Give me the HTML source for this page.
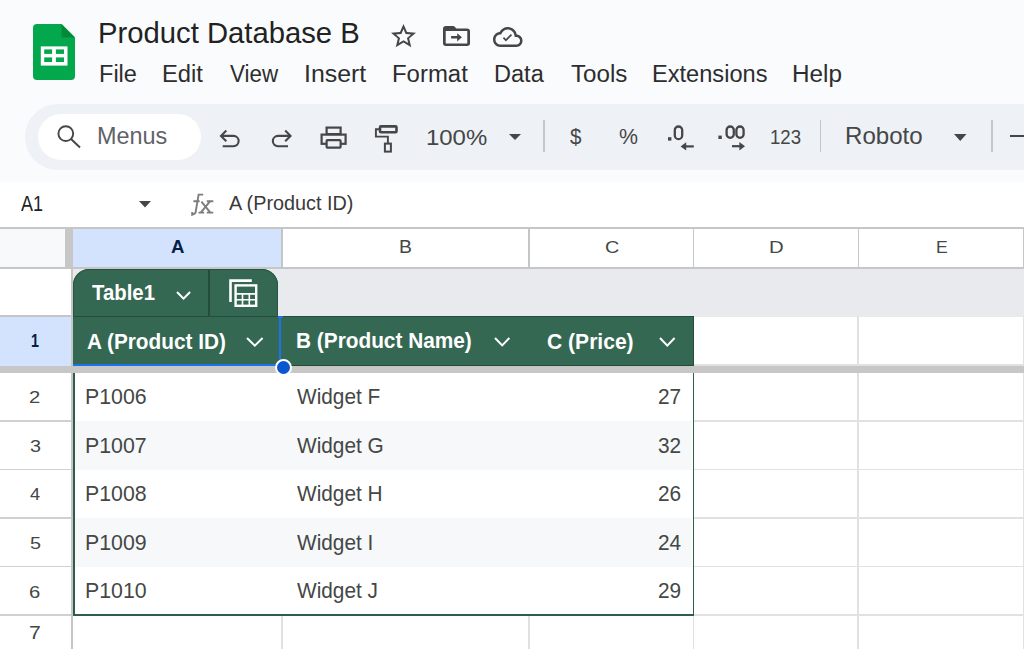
<!DOCTYPE html>
<html><head><meta charset="utf-8"><style>
html,body{margin:0;padding:0;width:1024px;height:649px;overflow:hidden;background:#fff}
body{position:relative;font-family:"Liberation Sans",sans-serif}
.r{position:absolute;box-sizing:border-box}
.t{position:absolute;white-space:nowrap;line-height:1;transform-origin:0 0}
</style></head><body>
<div class="r" style="left:0px;top:0px;width:1024px;height:182px;background:#f9fbfd;"></div>
<svg class="r" style="left:33px;top:24px;width:42px;height:56px" viewBox="0 0 42 56">
<path d="M4 0H28.5L42 13.5V52a4 4 0 0 1-4 4H4a4 4 0 0 1-4-4V4a4 4 0 0 1 4-4z" fill="#04a84c"/>
<path d="M28.5 0L42 13.5H28.5z" fill="#028a3c"/>
<rect x="7.8" y="22.4" width="26.7" height="19.2" fill="#fff"/>
<rect x="11.2" y="25.4" width="7.9" height="4.5" fill="#04a84c"/>
<rect x="22.9" y="25.4" width="8.1" height="4.5" fill="#04a84c"/>
<rect x="11.2" y="33.4" width="7.9" height="4.6" fill="#04a84c"/>
<rect x="22.9" y="33.4" width="8.1" height="4.6" fill="#04a84c"/>
</svg>
<div class="t" style="left:97.66px;top:17.59px;font-size:29.42px;color:#222222;transform:scaleX(0.9943);">Product Database B</div>
<svg class="r" style="left:391px;top:24px;width:25px;height:23.5px" viewBox="2 2 20 19.27" preserveAspectRatio="none"><path fill="#444746" d="M22 9.24l-7.19-.62L12 2 9.19 8.63 2 9.24l5.46 4.73L5.82 21 12 17.27 18.18 21l-1.63-7.03L22 9.24zM12 15.4l-3.76 2.27 1-4.28-3.32-2.88 4.38-.38L12 6.1l1.71 4.04 4.38.38-3.32 2.88 1 4.28L12 15.4z"/></svg>
<svg class="r" style="left:443px;top:26px;width:27px;height:20px" viewBox="2 4 20 16" preserveAspectRatio="none"><path fill="#444746" d="M20 6h-8l-2-2H4c-1.1 0-1.99.9-1.99 2L2 18c0 1.1.9 2 2 2h16c1.1 0 2-.9 2-2V8c0-1.1-.9-2-2-2zm0 12H4V8h16v10z"/><path fill="#444746" d="M4 5h6l1 1.5H4z"/><path fill="#444746" d="M8 12h4.5v-2.3L16 13l-3.5 3.3V14H8z"/></svg>
<svg class="r" style="left:493px;top:26.5px;width:29.5px;height:20px" viewBox="0 4 24 16" preserveAspectRatio="none"><path fill="#444746" d="M19.35 10.04C18.67 6.59 15.64 4 12 4 9.11 4 6.6 5.64 5.35 8.04 2.34 8.36 0 10.91 0 14c0 3.31 2.69 6 6 6h13c2.76 0 5-2.24 5-5 0-2.64-2.05-4.78-4.65-4.96zM19 18H6c-2.21 0-4-1.790-4-4 0-2.05 1.53-3.76 3.560-3.97l1.07-.11.5-.95C8.08 7.14 9.94 6 12 6c2.62 0 4.88 1.86 5.39 4.43l.3 1.5 1.53.11c1.56.1 2.78 1.41 2.78 2.96 0 1.650-1.35 3-3 3zm-8.5-2.5l-2.5-2.5 1-1 1.5 1.5 4-4 1 1z"/></svg>
<div class="t" style="left:98.62px;top:61.80px;font-size:23.77px;color:#2d2d2d;transform:scaleX(0.9911);">File</div>
<div class="t" style="left:161.50px;top:61.80px;font-size:23.77px;color:#2d2d2d;transform:scaleX(1.0005);">Edit</div>
<div class="t" style="left:230.48px;top:61.80px;font-size:23.77px;color:#2d2d2d;transform:scaleX(0.9417);">View</div>
<div class="t" style="left:304.16px;top:61.80px;font-size:23.77px;color:#2d2d2d;transform:scaleX(1.0466);">Insert</div>
<div class="t" style="left:392.09px;top:61.80px;font-size:23.77px;color:#2d2d2d;transform:scaleX(1.0068);">Format</div>
<div class="t" style="left:493.72px;top:61.80px;font-size:23.77px;color:#2d2d2d;transform:scaleX(0.9907);">Data</div>
<div class="t" style="left:571.22px;top:61.80px;font-size:23.77px;color:#2d2d2d;transform:scaleX(1.0168);">Tools</div>
<div class="t" style="left:651.91px;top:61.80px;font-size:23.77px;color:#2d2d2d;transform:scaleX(0.9929);">Extensions</div>
<div class="t" style="left:792.46px;top:61.80px;font-size:23.77px;color:#2d2d2d;transform:scaleX(1.0224);">Help</div>
<div class="r" style="left:25px;top:104px;width:1100px;height:66px;border-radius:33px;background:#eef1f6"></div>
<div class="r" style="left:38px;top:114px;width:163px;height:46px;border-radius:23px;background:#fff"></div>
<svg class="r" style="left:50px;top:118px;width:36px;height:36px" viewBox="50 118 36 36"><circle cx="65.8" cy="133.6" r="7.4" fill="none" stroke="#444746" stroke-width="1.9"/><path d="M71 139L80 147.5" stroke="#444746" stroke-width="2"/></svg>
<div class="t" style="left:96.73px;top:125.21px;font-size:23.04px;color:#5f6368;transform:scaleX(1.0166);">Menus</div>
<svg class="r" style="left:210px;top:120px;width:90px;height:36px" viewBox="210 120 90 36">
<g fill="none" stroke="#444746" stroke-width="2.1">
<path d="M221.5 135.9H233.5A5.15 5.15 0 0 1 233.5 146.2H222.7"/>
<path d="M226.3 130.6L221 135.9L226.3 141.2"/>
<path d="M290.5 135.9H278A5.15 5.15 0 0 0 278 146.2H288"/>
<path d="M285.2 130.6L290.5 135.9L285.2 141.2"/>
</g></svg>
<svg class="r" style="left:312px;top:118px;width:92px;height:40px" viewBox="312 118 92 40">
<g fill="none" stroke="#444746" stroke-width="2.2">
<rect x="326.6" y="127.6" width="14" height="6.5"/>
<rect x="321.6" y="134.6" width="24" height="9.2"/>
<rect x="326.6" y="140.2" width="14" height="7.4" rx="0.8" fill="#eef1f6"/>
</g>
<rect x="380" y="126.4" width="16.5" height="5.8" rx="1" fill="none" stroke="#444746" stroke-width="2.6"/>
<path d="M380 129.2H375.9V136.6H387.9V143" fill="none" stroke="#444746" stroke-width="1.9"/>
<rect x="384.9" y="143.6" width="6" height="8" fill="none" stroke="#444746" stroke-width="2"/>
</svg>
<div class="t" style="left:426.29px;top:127.48px;font-size:22.03px;color:#444746;transform:scaleX(1.0865);">100%</div>
<svg class="r" style="left:508.5px;top:134.2px;width:12px;height:6px" viewBox="0 0 10 5" preserveAspectRatio="none"><path d="M0 0H10L5 5z" fill="#444746"/></svg>
<div class="r" style="left:543px;top:120px;width:1.5px;height:32px;background:#c7c7c7;"></div>
<div class="t" style="left:570.29px;top:127.29px;font-size:21.30px;color:#444746;transform:scaleX(0.9653);">$</div>
<div class="t" style="left:618.85px;top:125.52px;font-size:21.74px;color:#444746;transform:scaleX(0.9825);">%</div>
<svg class="r" style="left:660px;top:120px;width:90px;height:36px" viewBox="660 120 90 36">
<rect x="668" y="137.2" width="3.4" height="3.4" fill="#444746"/>
<rect x="674.8" y="126.5" width="7.4" height="12.6" rx="3.7" fill="none" stroke="#444746" stroke-width="2.3"/>
<path d="M684.5 146.4H693.8" stroke="#444746" stroke-width="2.2"/>
<path d="M680.6 146.4L686.2 142.2V150.6z" fill="#444746"/>
<rect x="718.4" y="135.6" width="3.4" height="3.4" fill="#444746"/>
<rect x="726.6" y="126.5" width="7.2" height="11.3" rx="3.6" fill="none" stroke="#444746" stroke-width="2.3"/>
<rect x="736.4" y="126.5" width="7.2" height="11.3" rx="3.6" fill="none" stroke="#444746" stroke-width="2.3"/>
<path d="M732 146.2H741" stroke="#444746" stroke-width="2.2"/>
<path d="M745 146.2L739.4 142V150.4z" fill="#444746"/>
</svg>
<div class="t" style="left:770.01px;top:127.77px;font-size:19.57px;color:#444746;transform:scaleX(0.9525);">123</div>
<div class="r" style="left:819.5px;top:120px;width:1.5px;height:32px;background:#c7c7c7;"></div>
<div class="t" style="left:844.97px;top:125.29px;font-size:23.19px;color:#444746;transform:scaleX(1.0392);">Roboto</div>
<svg class="r" style="left:954.4px;top:133.6px;width:12.5px;height:7px" viewBox="0 0 10 5" preserveAspectRatio="none"><path d="M0 0H10L5 5z" fill="#444746"/></svg>
<div class="r" style="left:991px;top:120px;width:1.5px;height:32px;background:#c7c7c7;"></div>
<div class="r" style="left:1010px;top:135px;width:14px;height:2px;background:#444746;"></div>
<div class="r" style="left:0px;top:182px;width:1024px;height:45px;background:#ffffff;"></div>
<div class="t" style="left:21.00px;top:193.23px;font-size:22.32px;color:#1f1f1f;transform:scaleX(0.8042);">A1</div>
<svg class="r" style="left:138.8px;top:201.2px;width:12px;height:6.5px" viewBox="0 0 10 5" preserveAspectRatio="none"><path d="M0 0H10L5 5z" fill="#444746"/></svg>
<svg class="r" style="left:186px;top:190px;width:32px;height:30px" viewBox="186 190 32 30"><g fill="none" stroke="#7c7c7c" stroke-width="1.9" stroke-linecap="butt">
<path d="M203.2 194.6H198.6L195.4 213.4"/><path d="M195.6 213.2L192.2 214.8V212"/>
<path d="M193.4 201.2H199.6M206.8 201.2H213.3"/>
<path d="M201.4 201.6L210.2 212.4M209.8 201.6L200.9 212.4"/>
<path d="M198.5 212.6H204.2M206.8 212.6H213.3"/>
</g></svg>
<div class="t" style="left:229.20px;top:193.28px;font-size:20.14px;color:#3a3a3a;transform:scaleX(0.9840);">A (Product ID)</div>
<div class="r" style="left:0px;top:227px;width:1024px;height:422px;background:#ffffff;"></div>
<div class="r" style="left:0px;top:227px;width:1024px;height:2px;background:#c4c7c5;"></div>
<div class="r" style="left:0px;top:229px;width:65px;height:38px;background:#f8f9fa;"></div>
<div class="r" style="left:65px;top:229px;width:8px;height:39px;background:#c7c7c7;"></div>
<div class="r" style="left:73px;top:229px;width:208px;height:38px;background:#d3e3fd;"></div>
<div class="r" style="left:0px;top:267px;width:1024px;height:1.8000000000000114px;background:#c4c7c5;"></div>
<div class="r" style="left:281.2px;top:229px;width:1.6000000000000227px;height:38px;background:#c4c7c5;"></div>
<div class="r" style="left:528px;top:229px;width:1.6000000000000227px;height:38px;background:#c4c7c5;"></div>
<div class="r" style="left:692.8px;top:229px;width:1.6000000000000227px;height:38px;background:#c4c7c5;"></div>
<div class="r" style="left:857.5px;top:229px;width:1.6000000000000227px;height:38px;background:#c4c7c5;"></div>
<div class="r" style="left:1022.5px;top:229px;width:1.599999999999909px;height:38px;background:#c4c7c5;"></div>
<div class="t" style="left:171.14px;top:239.29px;font-size:17.54px;font-weight:bold;color:#041e49;transform:scaleX(1.0627);">A</div>
<div class="t" style="left:399.45px;top:239.37px;font-size:17.68px;color:#444746;transform:scaleX(1.0991);">B</div>
<div class="t" style="left:604.71px;top:239.14px;font-size:17.25px;color:#444746;transform:scaleX(1.1505);">C</div>
<div class="t" style="left:769.27px;top:239.22px;font-size:17.39px;color:#444746;transform:scaleX(1.1695);">D</div>
<div class="t" style="left:935.59px;top:239.22px;font-size:17.39px;color:#444746;transform:scaleX(1.0116);">E</div>
<div class="r" style="left:72px;top:269px;width:952px;height:48px;background:#e8eaed;"></div>
<div class="r" style="left:71.2px;top:268.8px;width:1.5999999999999943px;height:380.2px;background:#c4c7c5;"></div>
<div class="r" style="left:0px;top:315.2px;width:72px;height:1.6000000000000227px;background:#c4c7c5;"></div>
<div class="r" style="left:73px;top:268.5px;width:204.5px;height:48px;background:#356853;border-radius:16px 16px 0 0;box-shadow:inset 0 0 0 1px #2a5442"></div>
<div class="r" style="left:208.3px;top:270px;width:1.5999999999999943px;height:46px;background:#264d3b;"></div>
<div class="t" style="left:92.30px;top:282.48px;font-size:22.03px;font-weight:bold;color:#ffffff;transform:scaleX(0.9242);">Table1</div>
<div class="r" style="left:73px;top:315.8px;width:204.5px;height:1.5px;background:#264d3b;"></div>
<svg class="r" style="left:173.6px;top:289px;width:19.099999999999994px;height:12.600000000000023px" viewBox="173.6 289 19.099999999999994 12.600000000000023"><path d="M176.6 292L183.14999999999998 298.6L189.7 292" fill="none" stroke="#fff" stroke-width="2"/></svg>
<svg class="r" style="left:220px;top:272px;width:45px;height:40px" viewBox="220 272 45 40">
<path d="M230.5 302V280.6H251.8" fill="none" stroke="#fff" stroke-width="2.6"/>
<rect x="235.6" y="285.4" width="20.6" height="20.4" fill="none" stroke="#fff" stroke-width="2.4"/>
<path d="M235.6 293.9H256.2M235.6 299.8H256.2M242.5 293.9V305.8M249.3 293.9V305.8" stroke="#fff" stroke-width="1.6"/>
</svg>
<div class="r" style="left:0px;top:316.8px;width:71.2px;height:48.89999999999998px;background:#d3e3fd;"></div>
<div class="t" style="left:30.64px;top:332.40px;font-size:18.12px;font-weight:bold;color:#041e49;transform:scaleX(0.7869);">1</div>
<div class="r" style="left:73px;top:316px;width:621px;height:50px;background:#356853;"></div>
<div class="r" style="left:73px;top:316px;width:621px;height:1.3000000000000114px;background:#264d3b;"></div>
<div class="r" style="left:692.6px;top:316px;width:1.6000000000000227px;height:50px;background:#264d3b;"></div>
<div class="t" style="left:87.18px;top:330.63px;font-size:22.32px;font-weight:bold;color:#ffffff;transform:scaleX(0.9307);">A (Product ID)</div>
<div class="t" style="left:296.44px;top:330.32px;font-size:21.74px;font-weight:bold;color:#ffffff;transform:scaleX(0.9576);">B (Product Name)</div>
<div class="t" style="left:546.56px;top:330.72px;font-size:21.74px;font-weight:bold;color:#ffffff;transform:scaleX(0.9692);">C (Price)</div>
<svg class="r" style="left:244.4px;top:334.9px;width:21.599999999999994px;height:13.700000000000045px" viewBox="244.4 334.9 21.599999999999994 13.700000000000045"><path d="M247.4 337.9L255.2 345.6L263 337.9" fill="none" stroke="#fff" stroke-width="2"/></svg>
<svg class="r" style="left:491.6px;top:335.2px;width:20.399999999999977px;height:13.400000000000034px" viewBox="491.6 335.2 20.399999999999977 13.400000000000034"><path d="M494.6 338.2L501.8 345.6L509 338.2" fill="none" stroke="#fff" stroke-width="2"/></svg>
<svg class="r" style="left:656.7px;top:335.3px;width:20.59999999999991px;height:13.599999999999966px" viewBox="656.7 335.3 20.59999999999991 13.599999999999966"><path d="M659.7 338.3L667.0 345.9L674.3 338.3" fill="none" stroke="#fff" stroke-width="2"/></svg>
<div class="r" style="left:693.5px;top:364.2px;width:330.5px;height:1.6000000000000227px;background:#e1e1e1;"></div>
<div class="r" style="left:0px;top:365.7px;width:1024px;height:6.900000000000034px;background:#c7c7c7;"></div>
<div class="r" style="left:0px;top:420.2px;width:71.2px;height:1.6000000000000227px;background:#d0d0d0;"></div>
<div class="r" style="left:694.4px;top:420.2px;width:329.6px;height:1.6000000000000227px;background:#e1e1e1;"></div>
<div class="t" style="left:84.90px;top:385.96px;font-size:22.40px;color:#444746;transform:scaleX(0.9510);">P1006</div>
<div class="t" style="left:296.69px;top:385.96px;font-size:22.40px;color:#444746;transform:scaleX(0.9300);">Widget F</div>
<div class="t" style="left:658.22px;top:385.96px;font-size:22.40px;color:#444746;transform:scaleX(0.9300);">27</div>
<div class="t" style="left:29.29px;top:389.34px;font-size:17.25px;color:#444746;transform:scaleX(1.1723);">2</div>
<div class="r" style="left:74.8px;top:421px;width:617.7px;height:48.60000000000002px;background:#f6f8f9;"></div>
<div class="r" style="left:0px;top:468.8px;width:71.2px;height:1.6000000000000227px;background:#d0d0d0;"></div>
<div class="r" style="left:694.4px;top:468.8px;width:329.6px;height:1.6000000000000227px;background:#e1e1e1;"></div>
<div class="t" style="left:84.90px;top:434.76px;font-size:22.40px;color:#444746;transform:scaleX(0.9510);">P1007</div>
<div class="t" style="left:296.69px;top:434.76px;font-size:22.40px;color:#444746;transform:scaleX(0.9300);">Widget G</div>
<div class="t" style="left:658.22px;top:434.76px;font-size:22.40px;color:#444746;transform:scaleX(0.9300);">32</div>
<div class="t" style="left:29.51px;top:438.14px;font-size:17.25px;color:#444746;transform:scaleX(1.1473);">3</div>
<div class="r" style="left:0px;top:517.3000000000001px;width:71.2px;height:1.599999999999909px;background:#d0d0d0;"></div>
<div class="r" style="left:694.4px;top:517.3000000000001px;width:329.6px;height:1.599999999999909px;background:#e1e1e1;"></div>
<div class="t" style="left:84.90px;top:482.96px;font-size:22.40px;color:#444746;transform:scaleX(0.9510);">P1008</div>
<div class="t" style="left:296.69px;top:482.96px;font-size:22.40px;color:#444746;transform:scaleX(0.9300);">Widget H</div>
<div class="t" style="left:658.01px;top:482.96px;font-size:22.40px;color:#444746;transform:scaleX(0.9300);">26</div>
<div class="t" style="left:29.94px;top:486.34px;font-size:17.25px;color:#444746;transform:scaleX(1.0573);">4</div>
<div class="r" style="left:74.8px;top:518.1px;width:617.7px;height:48.60000000000002px;background:#f6f8f9;"></div>
<div class="r" style="left:0px;top:565.9000000000001px;width:71.2px;height:1.599999999999909px;background:#d0d0d0;"></div>
<div class="r" style="left:694.4px;top:565.9000000000001px;width:329.6px;height:1.599999999999909px;background:#e1e1e1;"></div>
<div class="t" style="left:84.90px;top:531.96px;font-size:22.40px;color:#444746;transform:scaleX(0.9510);">P1009</div>
<div class="t" style="left:296.69px;top:531.96px;font-size:22.40px;color:#444746;transform:scaleX(0.9300);">Widget I</div>
<div class="t" style="left:657.80px;top:531.96px;font-size:22.40px;color:#444746;transform:scaleX(0.9300);">24</div>
<div class="t" style="left:29.51px;top:535.34px;font-size:17.25px;color:#444746;transform:scaleX(1.1473);">5</div>
<div class="r" style="left:0px;top:614.4000000000001px;width:71.2px;height:1.599999999999909px;background:#d0d0d0;"></div>
<div class="r" style="left:694.4px;top:614.4000000000001px;width:329.6px;height:1.599999999999909px;background:#e1e1e1;"></div>
<div class="t" style="left:84.90px;top:580.16px;font-size:22.40px;color:#444746;transform:scaleX(0.9510);">P1010</div>
<div class="t" style="left:296.69px;top:580.16px;font-size:22.40px;color:#444746;transform:scaleX(0.9300);">Widget J</div>
<div class="t" style="left:658.22px;top:580.16px;font-size:22.40px;color:#444746;transform:scaleX(0.9300);">29</div>
<div class="t" style="left:29.29px;top:583.54px;font-size:17.25px;color:#444746;transform:scaleX(1.1723);">6</div>
<div class="t" style="left:28.93px;top:624.57px;font-size:17.68px;color:#444746;transform:scaleX(1.2049);">7</div>
<div class="r" style="left:281.2px;top:615.2px;width:1.6000000000000227px;height:33.799999999999955px;background:#e1e1e1;"></div>
<div class="r" style="left:528px;top:615.2px;width:1.6000000000000227px;height:33.799999999999955px;background:#e1e1e1;"></div>
<div class="r" style="left:692.8px;top:615.2px;width:1.6000000000000227px;height:33.799999999999955px;background:#e1e1e1;"></div>
<div class="r" style="left:857.2px;top:316px;width:1.7999999999999545px;height:50px;background:#e1e1e1;"></div>
<div class="r" style="left:857.2px;top:372.6px;width:1.7999999999999545px;height:276.4px;background:#e1e1e1;"></div>
<div class="r" style="left:1022.5px;top:316px;width:1.7999999999999545px;height:50px;background:#e1e1e1;"></div>
<div class="r" style="left:1022.5px;top:372.6px;width:1.7999999999999545px;height:276.4px;background:#e1e1e1;"></div>
<div class="r" style="left:0px;top:365.5px;width:1024px;height:7.300000000000011px;background:#c7c7c7;"></div>
<div class="r" style="left:72.8px;top:372.6px;width:2.0px;height:243.39999999999998px;background:#2f5d49;"></div>
<div class="r" style="left:692.5px;top:372.6px;width:1.8999999999999773px;height:243.39999999999998px;background:#2f5d49;"></div>
<div class="r" style="left:72.8px;top:614.4px;width:621.6px;height:1.6000000000000227px;background:#2f5d49;"></div>
<div class="r" style="left:73px;top:364.5px;width:620.5px;height:1.3000000000000114px;background:#244a3a;"></div>
<div class="r" style="left:73px;top:364px;width:208.2px;height:1.6999999999999886px;background:#1a73e8;"></div>
<div class="r" style="left:279.4px;top:316px;width:1.8000000000000114px;height:49.69999999999999px;background:#1a73e8;"></div>
<div class="r" style="left:277.7px;top:316px;width:5.100000000000023px;height:1.5px;background:#1a73e8;"></div>
<div class="r" style="left:274.5px;top:358.5px;width:17px;height:17px;border-radius:50%;background:#0b57d0;border:2px solid #fff"></div>
</body></html>
